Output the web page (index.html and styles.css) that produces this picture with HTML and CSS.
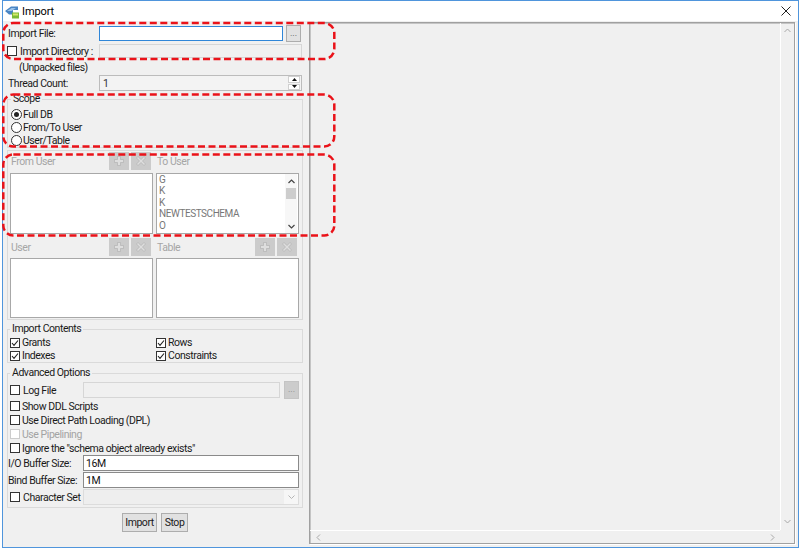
FILE: index.html
```html
<!DOCTYPE html>
<html lang="en">
<head>
  <meta charset="UTF-8" />
  <title>Import</title>
  <link rel="stylesheet" href="styles.css">
</head>
<body>

  <div class="window">
    <div class="titlebar">
      <svg class="app-icon" width="16" height="14" viewBox="0 0 16 14">
        <path d="M1 6 L7 1.5 L14 1.5 L14 5 L9 5 L9 9.5 L5 9.5 Z" fill="#4a86c5"/>
        <path d="M3 6 L7.5 3 L12 3 L7.5 6 Z" fill="#9cc3ea"/>
        <rect x="8" y="7.5" width="7" height="6" fill="#7dbb35"/>
        <rect x="9" y="8.5" width="5" height="2" fill="#d6e86c"/>
      </svg>
      <span class="title">Import</span>
      <svg class="close" width="10" height="10" viewBox="0 0 10 10">
        <path d="M0.5 0.5 L9.5 9.5 M9.5 0.5 L0.5 9.5" stroke="#222" stroke-width="1"/>
      </svg>
    </div>

    <div class="client">
      <div class="left">

        <div class="row file-row">
          <span class="lbl">Import File:</span>
          <div class="edit focus w-file"></div>
          <div class="dots">...</div>
        </div>

        <div class="row dir-row">
          <span class="lbl cb-lbl"><span class="cb"></span><span class="cb-text">Import Directory :</span></span>
          <div class="edit off w-dir"></div>
        </div>

        <div class="row note">(Unpacked files)</div>

        <div class="row thread-row">
          <span class="lbl">Thread Count:</span>
          <div class="spin">
            <span class="spin-val">1</span>
            <div class="spin-btns">
              <span class="spin-btn"><svg width="5" height="3" viewBox="0 0 5 3"><path d="M0 3 L2.5 0 L5 3 Z" fill="#111"/></svg></span>
              <span class="spin-btn"><svg width="5" height="3" viewBox="0 0 5 3"><path d="M0 0 L2.5 3 L5 0 Z" fill="#111"/></svg></span>
            </div>
          </div>
        </div>

        <fieldset class="group scope">
          <legend>Scope</legend>
          <div class="opt"><span class="rb on"></span><span class="rb-text">Full DB</span></div>
          <div class="opt"><span class="rb"></span><span class="rb-text">From/To User</span></div>
          <div class="opt"><span class="rb"></span><span class="rb-text">User/Table</span></div>
        </fieldset>

        <div class="lists">
          <div class="list-head">
            <span class="dim">From User</span>
            <span class="mini"><svg width="10" height="10" viewBox="0 0 10 10"><path d="M3.5 0.5 H6.5 V3.5 H9.5 V6.5 H6.5 V9.5 H3.5 V6.5 H0.5 V3.5 H3.5 Z" fill="#dedede" stroke="#b3b3b3" stroke-width="0.7"/></svg></span>
            <span class="mini"><svg width="10" height="10" viewBox="0 0 10 10"><path d="M2 0.5 L5 3.5 L8 0.5 L9.5 2 L6.5 5 L9.5 8 L8 9.5 L5 6.5 L2 9.5 L0.5 8 L3.5 5 L0.5 2 Z" fill="#dedede" stroke="#b3b3b3" stroke-width="0.7"/></svg></span>
          </div>
          <div class="list-head">
            <span class="dim">To User</span>
          </div>
          <div class="listbox first"></div>
          <div class="listbox first scroller">
            <div class="items">
              <div>G</div>
              <div>K</div>
              <div>K</div>
              <div>NEWTESTSCHEMA</div>
              <div>O</div>
            </div>
            <div class="lscroll">
              <svg width="7" height="5" viewBox="0 0 7 5"><path d="M0.5 4 L3.5 1 L6.5 4" fill="none" stroke="#444" stroke-width="1.2"/></svg>
              <span class="lthumb"></span>
              <span class="lgap"></span>
              <svg width="7" height="5" viewBox="0 0 7 5"><path d="M0.5 1 L3.5 4 L6.5 1" fill="none" stroke="#444" stroke-width="1.2"/></svg>
            </div>
          </div>
          <div class="list-head second">
            <span class="dim">User</span>
            <span class="mini"><svg width="10" height="10" viewBox="0 0 10 10"><path d="M3.5 0.5 H6.5 V3.5 H9.5 V6.5 H6.5 V9.5 H3.5 V6.5 H0.5 V3.5 H3.5 Z" fill="#dedede" stroke="#b3b3b3" stroke-width="0.7"/></svg></span>
            <span class="mini"><svg width="10" height="10" viewBox="0 0 10 10"><path d="M2 0.5 L5 3.5 L8 0.5 L9.5 2 L6.5 5 L9.5 8 L8 9.5 L5 6.5 L2 9.5 L0.5 8 L3.5 5 L0.5 2 Z" fill="#dedede" stroke="#b3b3b3" stroke-width="0.7"/></svg></span>
          </div>
          <div class="list-head second">
            <span class="dim">Table</span>
            <span class="mini"><svg width="10" height="10" viewBox="0 0 10 10"><path d="M3.5 0.5 H6.5 V3.5 H9.5 V6.5 H6.5 V9.5 H3.5 V6.5 H0.5 V3.5 H3.5 Z" fill="#dedede" stroke="#b3b3b3" stroke-width="0.7"/></svg></span>
            <span class="mini"><svg width="10" height="10" viewBox="0 0 10 10"><path d="M2 0.5 L5 3.5 L8 0.5 L9.5 2 L6.5 5 L9.5 8 L8 9.5 L5 6.5 L2 9.5 L0.5 8 L3.5 5 L0.5 2 Z" fill="#dedede" stroke="#b3b3b3" stroke-width="0.7"/></svg></span>
          </div>
          <div class="listbox last"></div>
          <div class="listbox last"></div>
        </div>

        <fieldset class="group contents">
          <legend>Import Contents</legend>
          <div class="two-col">
            <div class="opt"><span class="cb"><svg width="8" height="8" viewBox="0 0 8 8"><path d="M1 4 L3 6.3 L7 1.5" fill="none" stroke="#222" stroke-width="1.1"/></svg></span><span class="cb-text">Grants</span></div>
            <div class="opt"><span class="cb"><svg width="8" height="8" viewBox="0 0 8 8"><path d="M1 4 L3 6.3 L7 1.5" fill="none" stroke="#222" stroke-width="1.1"/></svg></span><span class="cb-text">Rows</span></div>
            <div class="opt"><span class="cb"><svg width="8" height="8" viewBox="0 0 8 8"><path d="M1 4 L3 6.3 L7 1.5" fill="none" stroke="#222" stroke-width="1.1"/></svg></span><span class="cb-text">Indexes</span></div>
            <div class="opt"><span class="cb"><svg width="8" height="8" viewBox="0 0 8 8"><path d="M1 4 L3 6.3 L7 1.5" fill="none" stroke="#222" stroke-width="1.1"/></svg></span><span class="cb-text">Constraints</span></div>
          </div>
        </fieldset>

        <fieldset class="group advanced">
          <legend>Advanced Options</legend>
          <div class="row log-row">
            <span class="adv-lbl cb-lbl"><span class="cb"></span><span class="cb-text">Log File</span></span>
            <div class="edit off w-log"></div>
            <div class="dots off">...</div>
          </div>
          <div class="opt tall"><span class="cb"></span><span class="cb-text">Show DDL Scripts</span></div>
          <div class="opt tall"><span class="cb"></span><span class="cb-text">Use Direct Path Loading (DPL)</span></div>
          <div class="opt tall disabled"><span class="cb off"></span><span class="cb-text">Use Pipelining</span></div>
          <div class="opt tall"><span class="cb"></span><span class="cb-text">Ignore the "schema object already exists"</span></div>
          <div class="row buf-row">
            <span class="adv-lbl plain">I/O Buffer Size:</span>
            <div class="edit value w-buf">16M</div>
          </div>
          <div class="row buf-row gap">
            <span class="adv-lbl plain">Bind Buffer Size:</span>
            <div class="edit value w-buf">1M</div>
          </div>
          <div class="row buf-row gap">
            <span class="adv-lbl cb-lbl"><span class="cb"></span><span class="cb-text">Character Set</span></span>
            <div class="combo">
              <span class="combo-field"></span>
              <span class="combo-btn"><svg width="7" height="4" viewBox="0 0 7 4"><path d="M0.5 0.5 L3.5 3.5 L6.5 0.5" fill="none" stroke="#b5b5b5" stroke-width="1"/></svg></span>
            </div>
          </div>
        </fieldset>

        <div class="actions">
          <span class="btn w-import">Import</span>
          <span class="btn w-stop">Stop</span>
        </div>

      </div>

      <div class="output">
        <div class="output-body"></div>
        <div class="vscroll">
          <svg width="7" height="5" viewBox="0 0 7 5"><path d="M0.5 4 L3.5 1 L6.5 4" fill="none" stroke="#a8a8a8" stroke-width="1"/></svg>
          <svg width="7" height="5" viewBox="0 0 7 5"><path d="M0.5 1 L3.5 4 L6.5 1" fill="none" stroke="#a8a8a8" stroke-width="1"/></svg>
        </div>
        <div class="hscroll">
          <svg width="5" height="7" viewBox="0 0 5 7"><path d="M4 0.5 L1 3.5 L4 6.5" fill="none" stroke="#a8a8a8" stroke-width="1"/></svg>
          <svg width="5" height="7" viewBox="0 0 5 7"><path d="M1 0.5 L4 3.5 L1 6.5" fill="none" stroke="#a8a8a8" stroke-width="1"/></svg>
        </div>
        <div class="corner"></div>
      </div>
    </div>
  </div>

  <svg class="marks" width="800" height="551" viewBox="0 0 800 551">
    <rect x="3.3" y="23" width="331" height="36" rx="10" />
    <rect x="3.3" y="94.5" width="331" height="52" rx="10" />
    <rect x="3.3" y="154.5" width="331" height="81" rx="10" />
  </svg>

</body>
</html>
```

FILE: styles.css
```css
* {
  box-sizing: border-box;
}

body {
  margin: 0;
  width: 800px;
  height: 551px;
  overflow: hidden;
  position: relative;
  background: #fff;
  font-family: Roboto, "Liberation Sans", sans-serif;
  font-size: 10.5px;
  letter-spacing: -0.45px;
  line-height: 13px;
  color: #1a1a1a;
}

.window {
  margin-left: 2px;
  width: 797px;
  height: 548px;
  border: 1px solid #4f95dc;
  background: #f0f0f0;
  display: flex;
  flex-direction: column;
}

/* title bar */

.titlebar {
  height: 20px;
  flex-shrink: 0;
  background: #fff;
  display: flex;
  align-items: center;
  padding-left: 1px;
}

.app-icon {
  margin-top: 1px;
}

.title {
  margin-left: 2px;
  font-size: 11px;
  letter-spacing: -0.1px;
  color: #000;
}

.close {
  margin-left: auto;
  margin-right: 7px;
}

.client {
  flex: 1;
  display: flex;
  min-height: 0;
}

/* left settings column */

.left {
  width: 306px;
  flex-shrink: 0;
  padding-left: 4px;
  display: flex;
  flex-direction: column;
  white-space: nowrap;
}

.row {
  display: flex;
  align-items: center;
  flex-shrink: 0;
}

.lbl {
  width: 92px;
  padding-left: 1px;
  flex-shrink: 0;
}

.cb-lbl {
  display: flex;
  align-items: center;
  padding-left: 0;
}

.cb-text {
  margin-left: 2px;
}

.cb-lbl .cb + .cb-text {
  margin-left: 3px;
}

.file-row {
  margin-top: 4px;
  height: 17px;
}

.dir-row {
  margin-top: 2px;
  height: 14px;
}

.note {
  margin-top: 3px;
  height: 13px;
  padding-left: 12px;
}

.thread-row {
  margin-top: 1px;
  height: 16px;
}

.edit {
  height: 15px;
  border: 1px solid #b4b4b4;
  background: #fff;
  display: flex;
  align-items: center;
  padding-left: 2px;
  flex-shrink: 0;
}

.edit.focus {
  border-color: #2f86d8;
}

.edit.off {
  border-color: #d6d6d6;
  background: #f0f0f0;
}

.edit.value {
  border-color: #8a8a8a;
  color: #111;
}

.w-file { width: 184px; }
.w-dir { width: 203px; height: 14px; }
.w-log { width: 197px; height: 16px; }
.w-buf { width: 216px; height: 16px; }

.dots {
  margin-left: 3px;
  width: 15px;
  height: 17px;
  flex-shrink: 0;
  background: #e1e1e1;
  border: 1px solid #adadad;
  color: #555;
  font-size: 9px;
  line-height: 15px;
  letter-spacing: 0;
  text-align: center;
}

.dots.off {
  margin-left: 4px;
  height: 18px;
  background: #cccccc;
  border-color: #c4c4c4;
  color: #8a8a8a;
}

.spin {
  width: 203px;
  height: 16px;
  border: 1px solid #bcbcbc;
  background: #f3f3f3;
  display: flex;
  align-items: center;
}

.spin-val {
  flex: 1;
  padding-left: 3px;
  color: #333;
}

.spin-btns {
  width: 12px;
  height: 14px;
  margin-right: 1px;
  display: flex;
  flex-direction: column;
  gap: 1px;
}

.spin-btn {
  flex: 1;
  background: #fff;
  border: 1px solid #d0d0d0;
  display: flex;
  align-items: center;
  justify-content: center;
}

.spin-btn svg {
  display: block;
}

/* group boxes */

.group {
  margin: 0;
  min-width: 0;
  width: 296px;
  flex-shrink: 0;
  border: 1px solid #dadada;
  padding: 3px 0 0 3px;
}

.group legend {
  padding: 0 2px;
  line-height: 12px;
  color: #1a1a1a;
}

.scope {
  margin-top: 2px;
}

.opt {
  display: flex;
  align-items: center;
  height: 13px;
}

.opt.tall {
  height: 14px;
}

.opt.disabled {
  color: #a3a3a3;
}

.rb {
  width: 11px;
  height: 11px;
  flex-shrink: 0;
  border: 1px solid #333;
  border-radius: 50%;
  background: #fff;
  display: flex;
  align-items: center;
  justify-content: center;
}

.rb.on::after {
  content: "";
  width: 5px;
  height: 5px;
  border-radius: 50%;
  background: #222;
}

.rb-text {
  margin-left: 1px;
}

.cb {
  width: 10px;
  height: 10px;
  flex-shrink: 0;
  border: 1px solid #333;
  background: #fff;
  display: flex;
  align-items: center;
  justify-content: center;
}

.cb svg {
  display: block;
}

.cb.off {
  border-color: #cccccc;
}

/* user / table lists */

.lists {
  margin-top: 2px;
  width: 296px;
  flex-shrink: 0;
  border: 1px solid #dadada;
  padding: 0 3px 1px 2px;
  display: grid;
  grid-template-columns: 143px 143px;
  column-gap: 3px;
}

.list-head {
  height: 20px;
  display: flex;
  align-items: center;
  gap: 2px;
  padding: 0 2px 0 1px;
}

.list-head.second {
  margin-top: 3px;
}

.list-head .dim {
  flex: 1;
  color: #a6a6a6;
}

.mini {
  width: 20px;
  height: 18px;
  background: #cbcbcb;
  display: flex;
  align-items: center;
  justify-content: center;
}

.listbox {
  border: 1px solid #a8a8a8;
  background: #fff;
}

.listbox.first {
  margin-top: 2px;
  height: 61px;
}

.listbox.last {
  margin-top: 1px;
  height: 60px;
}

.scroller {
  display: flex;
}

.items {
  flex: 1;
  padding: 0 0 0 2px;
  font-size: 10px;
  line-height: 11.4px;
  color: #777;
  overflow: hidden;
}

.lscroll {
  width: 12px;
  margin: 0 1px 0 0;
  background: #f7f7f7;
  display: flex;
  flex-direction: column;
  align-items: center;
  padding: 5px 0 4px;
}

.lthumb {
  margin-top: 4px;
  width: 10px;
  height: 11px;
  background: #cdcdcd;
}

.lgap {
  flex: 1;
}

/* import contents */

.contents {
  margin-top: 3px;
  padding: 1px 0 0 2px;
}

.two-col {
  display: grid;
  grid-template-columns: 146px 1fr;
}

/* advanced options */

.advanced {
  margin-top: 4px;
  padding: 1px 0 2px 2px;
}

.log-row {
  margin-top: 1px;
  height: 18px;
}

.adv-lbl {
  width: 73px;
  flex-shrink: 0;
}

.adv-lbl.plain {
  margin-left: -2px;
  width: 75px;
}

.buf-row {
  height: 16px;
}

.buf-row.gap {
  margin-top: 1px;
}

.combo {
  width: 216px;
  height: 16px;
  border: 1px solid #dcdcdc;
  background: #eeeeee;
  display: flex;
}

.combo-field {
  flex: 1;
}

.combo-btn {
  width: 14px;
  background: #f6f6f6;
  display: flex;
  align-items: center;
  justify-content: center;
}

/* bottom buttons */

.actions {
  margin-top: 5px;
  width: 296px;
  display: flex;
  justify-content: center;
  gap: 4px;
}

.btn {
  height: 19px;
  background: #e1e1e1;
  border: 1px solid #adadad;
  display: flex;
  align-items: center;
  justify-content: center;
  color: #1a1a1a;
}

.w-import { width: 35px; }
.w-stop { width: 27px; }

/* log output area */

.output {
  margin-top: 1px;
  width: 486px;
  height: 522px;
  border: 1px solid #a0a0a0;
  box-shadow: inset 1px 1px 0 #c4c4c4, 1px 1px 0 #fff;
  display: grid;
  grid-template-columns: 1fr 14px;
  grid-template-rows: 1fr 13px;
}

.vscroll {
  border-left: 1px solid #fff;
  display: flex;
  flex-direction: column;
  justify-content: space-between;
  align-items: center;
  padding: 5px 0 6px;
}

.hscroll {
  border-top: 1px solid #fff;
  display: flex;
  justify-content: space-between;
  align-items: center;
  padding: 0 5px 0 6px;
}

.vscroll svg,
.hscroll svg {
  display: block;
}

/* review annotations drawn over the dialog */

.marks {
  position: absolute;
  left: 0;
  top: 0;
  pointer-events: none;
}

.marks rect {
  fill: none;
  stroke: #ea1219;
  stroke-width: 2.5;
  stroke-dasharray: 7 3.5;
}
```
